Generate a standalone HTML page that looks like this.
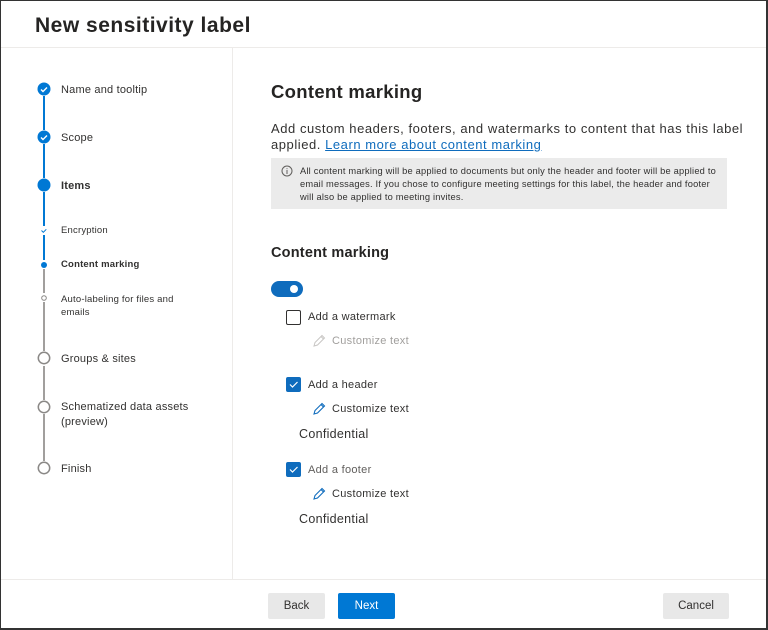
<!DOCTYPE html>
<html><head><meta charset="utf-8"><style>
*{margin:0;padding:0;box-sizing:border-box}
body{width:768px;height:630px;position:relative;background:#fff;font-family:"Liberation Sans",sans-serif;color:#323130;overflow:hidden}
.frame{position:absolute;left:0;top:0;width:768px;height:630px;border:1px solid #333;border-bottom-width:2px;border-right-width:2px}
.a{position:absolute;white-space:nowrap}
.hl{position:absolute;background:#edebe9}
.step{position:absolute;font-size:11px;color:#323130;letter-spacing:0.2px}
.vl{position:absolute;left:43px;width:2px}
.cb{position:absolute;width:15px;height:15px;border:1px solid #323130;border-radius:2px}
.cbc{background:#0f6cbd;border-color:#0f6cbd}
.btn{position:absolute;top:593px;height:26px;font-size:11.5px;text-align:center;line-height:26px;border-radius:2px}
</style></head><body>
<div class="a" style="left:35px;top:14px;font-size:21px;font-weight:bold;color:#252423;letter-spacing:0.5px">New sensitivity label</div>
<div class="hl" style="left:0;top:47px;width:768px;height:1px"></div>
<div class="hl" style="left:232px;top:48px;width:1px;height:531px"></div>
<div class="hl" style="left:0;top:579px;width:768px;height:1px"></div>

<div class="vl" style="top:96px;height:34px;background:#0078d4"></div>
<div class="vl" style="top:144px;height:34px;background:#0078d4"></div>
<div class="vl" style="top:192px;height:34px;background:#0078d4"></div>
<div class="vl" style="top:235px;height:25px;background:#0078d4"></div>
<div class="vl" style="top:269px;height:24px;background:#a19f9d"></div>
<div class="vl" style="top:302px;height:49px;background:#a19f9d"></div>
<div class="vl" style="top:366px;height:34px;background:#a19f9d"></div>
<div class="vl" style="top:414px;height:47px;background:#a19f9d"></div>
<svg style="position:absolute;left:0;top:0" width="232" height="580">
<circle cx="44" cy="89" r="6.5" fill="#0078d4"/><path d="M41 89.5l2 2 4-4" stroke="#fff" stroke-width="1.4" fill="none"/>
<circle cx="44" cy="137" r="6.5" fill="#0078d4"/><path d="M41 137.5l2 2 4-4" stroke="#fff" stroke-width="1.4" fill="none"/>
<circle cx="44" cy="185" r="6.5" fill="#0078d4"/>
<path d="M41.5 230.5l1.8 1.8 3-3" stroke="#0078d4" stroke-width="1" fill="none"/>
<circle cx="44" cy="265" r="3" fill="#0078d4"/>
<circle cx="44" cy="298" r="2.3" fill="#fff" stroke="#8a8886" stroke-width="1"/>
<circle cx="44" cy="358" r="5.7" fill="#fff" stroke="#8a8886" stroke-width="1.5"/>
<circle cx="44" cy="407" r="5.7" fill="#fff" stroke="#8a8886" stroke-width="1.5"/>
<circle cx="44" cy="468" r="5.7" fill="#fff" stroke="#8a8886" stroke-width="1.5"/>
</svg>
<div class="step" style="left:61px;top:84px">Name and tooltip</div>
<div class="step" style="left:61px;top:132px">Scope</div>
<div class="step" style="left:61px;top:180px;font-weight:bold">Items</div>
<div class="step" style="left:61px;top:225px;font-size:9.5px">Encryption</div>
<div class="step" style="left:61px;top:259px;font-size:9.5px;font-weight:bold">Content marking</div>
<div class="step" style="left:61px;top:293px;font-size:9.5px;line-height:13px">Auto-labeling for files and<br>emails</div>
<div class="step" style="left:61px;top:353px">Groups &amp; sites</div>
<div class="step" style="left:61px;top:400px;line-height:15px">Schematized data assets<br>(preview)</div>
<div class="step" style="left:61px;top:463px">Finish</div>

<div class="a" style="left:271px;top:81px;font-size:18.5px;font-weight:bold;color:#252423;letter-spacing:0.3px">Content marking</div>
<div class="a" style="left:271px;top:121px;font-size:13px;line-height:16px;letter-spacing:0.55px">Add custom headers, footers, and watermarks to content that has this label<br>applied. <span style="color:#0f6cbd;text-decoration:underline">Learn more about content marking</span></div>
<div class="a" style="left:271px;top:158px;width:456px;height:51px;background:#ebebeb"></div>
<svg style="position:absolute;left:281px;top:165px" width="12" height="12"><circle cx="6" cy="6" r="5" fill="none" stroke="#605e5c" stroke-width="1"/><path d="M6 5v4M6 3.2v.9" stroke="#605e5c" stroke-width="1"/></svg>
<div class="a" style="left:300px;top:165px;font-size:9.3px;line-height:13px;color:#323130;letter-spacing:0.2px">All content marking will be applied to documents but only the header and footer will be applied to<br>email messages. If you chose to configure meeting settings for this label, the header and footer<br>will also be applied to meeting invites.</div>
<div class="a" style="left:271px;top:245px;font-size:14.5px;font-weight:bold;color:#252423;letter-spacing:0.2px">Content marking</div>
<div class="a" style="left:271px;top:281px;width:32px;height:16px;border-radius:8px;background:#0f6cbd"></div>
<div class="a" style="left:290px;top:285px;width:8px;height:8px;border-radius:50%;background:#fff"></div>

<div class="cb" style="left:286px;top:310px"></div>
<div class="a" style="left:308px;top:311px;font-size:11px;letter-spacing:0.3px">Add a watermark</div>
<svg style="position:absolute;left:312px;top:334px" width="14" height="14"><path d="M2 12l1-3.5 7-7 2.5 2.5-7 7z M9 2.5l2.5 2.5" fill="none" stroke="#c8c6c4" stroke-width="1"/></svg>
<div class="a" style="left:332px;top:335px;font-size:11px;color:#a19f9d;letter-spacing:0.3px">Customize text</div>

<div class="cb cbc" style="left:286px;top:377px"></div>
<svg style="position:absolute;left:286px;top:377px" width="15" height="15"><path d="M4 7.5l2.5 2.5 5-5" stroke="#fff" stroke-width="1.2" fill="none"/></svg>
<div class="a" style="left:308px;top:379px;font-size:11px;letter-spacing:0.3px">Add a header</div>
<svg style="position:absolute;left:312px;top:402px" width="14" height="14"><path d="M2 12l1-3.5 7-7 2.5 2.5-7 7z M9 2.5l2.5 2.5" fill="none" stroke="#0f6cbd" stroke-width="1.1"/></svg>
<div class="a" style="left:332px;top:403px;font-size:11px;letter-spacing:0.3px">Customize text</div>
<div class="a" style="left:299px;top:427px;font-size:12.5px;letter-spacing:0.3px">Confidential</div>

<div class="cb cbc" style="left:286px;top:462px"></div>
<svg style="position:absolute;left:286px;top:462px" width="15" height="15"><path d="M4 7.5l2.5 2.5 5-5" stroke="#fff" stroke-width="1.2" fill="none"/></svg>
<div class="a" style="left:308px;top:464px;font-size:11px;color:#605e5c;letter-spacing:0.3px">Add a footer</div>
<svg style="position:absolute;left:312px;top:487px" width="14" height="14"><path d="M2 12l1-3.5 7-7 2.5 2.5-7 7z M9 2.5l2.5 2.5" fill="none" stroke="#0f6cbd" stroke-width="1.1"/></svg>
<div class="a" style="left:332px;top:488px;font-size:11px;letter-spacing:0.3px">Customize text</div>
<div class="a" style="left:299px;top:512px;font-size:12.5px;letter-spacing:0.3px">Confidential</div>

<div class="btn" style="left:268px;width:57px;background:#e8e8e8">Back</div>
<div class="btn" style="left:338px;width:57px;background:#0078d4;color:#fff">Next</div>
<div class="btn" style="left:663px;width:66px;background:#e8e8e8">Cancel</div>
<div class="frame"></div>
</body></html>
